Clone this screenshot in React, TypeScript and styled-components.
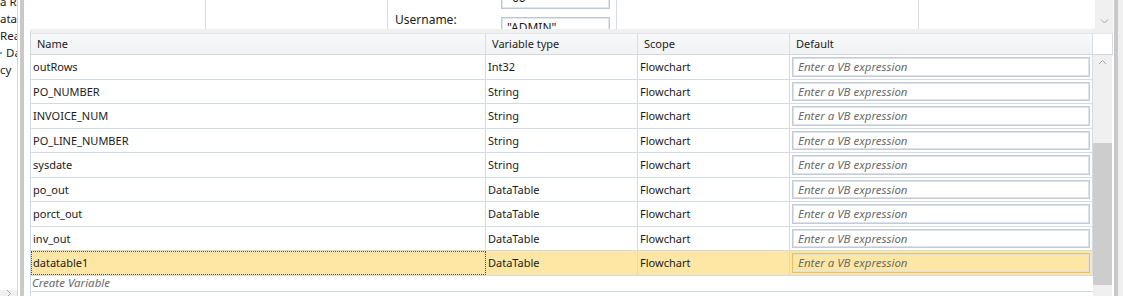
import React from 'react';
import styled, { createGlobalStyle } from 'styled-components';

type Variable = {
  name: string;
  type: string;
  scope: string;
};

const variables: Variable[] = [
  { name: 'outRows', type: 'Int32', scope: 'Flowchart' },
  { name: 'PO_NUMBER', type: 'String', scope: 'Flowchart' },
  { name: 'INVOICE_NUM', type: 'String', scope: 'Flowchart' },
  { name: 'PO_LINE_NUMBER', type: 'String', scope: 'Flowchart' },
  { name: 'sysdate', type: 'String', scope: 'Flowchart' },
  { name: 'po_out', type: 'DataTable', scope: 'Flowchart' },
  { name: 'porct_out', type: 'DataTable', scope: 'Flowchart' },
  { name: 'inv_out', type: 'DataTable', scope: 'Flowchart' },
  { name: 'datatable1', type: 'DataTable', scope: 'Flowchart' },
];

const treeItems = [
  { label: 'a Re', indent: 0 },
  { label: 'ata', indent: 0 },
  { label: 'Rea', indent: 0 },
  { label: 'Da', indent: 6, dot: true },
  { label: 'cy', indent: 0 },
];

const Chevron: React.FC<{ dir: 'up' | 'down' | 'right' }> = ({ dir }) => {
  const d =
    dir === 'up' ? 'M1 5 L4.5 1.5 L8 5' : dir === 'down' ? 'M1 1.5 L4.5 5 L8 1.5' : 'M2 1 L5.5 4.5 L2 8';
  return (
    <svg width="9" height="9" viewBox="0 0 9 9">
      <path d={d} fill="none" stroke="#a6a6a6" strokeWidth="1" />
    </svg>
  );
};

const App: React.FC = () => {
  return (
    <>
      <GlobalStyle />
      <Page>
        <TreePane>
          <TreeList>
            {treeItems.map((item) => (
              <TreeItem key={item.label} $indent={item.indent}>
                {item.dot && <TreeDot />}
                {item.label}
              </TreeItem>
            ))}
          </TreeList>
          <TreeScroll>
            <Chevron dir="right" />
          </TreeScroll>
        </TreePane>
        <Splitter />
        <Designer>
          <PropsPane>
            <PropsColumn $width={182} />
            <PropsColumn $width={182} />
            <PropsColumn $width={229}>
              <PropList>
                <PropRow>
                  <PropLabel>Password:</PropLabel>
                  <PropBox>"60"</PropBox>
                </PropRow>
                <PropRow>
                  <PropLabel>Username:</PropLabel>
                  <PropBox>"ADMIN"</PropBox>
                </PropRow>
              </PropList>
            </PropsColumn>
            <PropsColumn $width={302} />
            <PropsColumn $width={176} />
            <PropsScroll>
              <Chevron dir="down" />
            </PropsScroll>
          </PropsPane>
          <GridArea>
            <Grid>
              <HeaderRow>
                <HeaderCell $width={455}>Name</HeaderCell>
                <HeaderCell $width={152}>Variable type</HeaderCell>
                <HeaderCell $width={152}>Scope</HeaderCell>
                <HeaderCell $width={303}>Default</HeaderCell>
                <HeaderCorner />
              </HeaderRow>
              <Body>
                <Rows>
                  {variables.map((v) => {
                    const selected = v.name === 'datatable1';
                    return (
                      <Row key={v.name} $selected={selected}>
                        <NameCell $focused={selected}>{v.name}</NameCell>
                        <Cell $width={152}>{v.type}</Cell>
                        <Cell $width={152}>{v.scope}</Cell>
                        <DefaultCell>
                          <ExpressionBox $selected={selected}>Enter a VB expression</ExpressionBox>
                        </DefaultCell>
                      </Row>
                    );
                  })}
                  <CreateRow>Create Variable</CreateRow>
                </Rows>
                <VScroll>
                  <ScrollButton>
                    <Chevron dir="up" />
                  </ScrollButton>
                  <ScrollTrack $height={71} />
                  <ScrollThumb />
                  <ScrollTrack $height={6} />
                  <ScrollButton>
                    <Chevron dir="down" />
                  </ScrollButton>
                </VScroll>
              </Body>
            </Grid>
          </GridArea>
        </Designer>
        <OuterStrip />
      </Page>
    </>
  );
};

export default App;

const GlobalStyle = createGlobalStyle`
  html, body {
    margin: 0;
    padding: 0;
    background: #fff;
  }
  body {
    font-family: 'Noto Sans', 'Liberation Sans', sans-serif;
    font-size: 11px;
    color: #1b1b1b;
  }
`;

const Page = styled.div`
  display: flex;
  width: 1123px;
  height: 296px;
  overflow: hidden;
  background: #fff;
`;

const TreePane = styled.div`
  width: 18px;
  box-sizing: border-box;
  border-right: 1px solid #d6d6d6;
  display: flex;
  flex-direction: column;
  overflow: hidden;
`;

const TreeList = styled.div`
  flex: 1;
  margin-top: -7px;
`;

const TreeItem = styled.div<{ $indent: number }>`
  height: 17px;
  line-height: 17px;
  font-size: 11.5px;
  white-space: nowrap;
  padding-left: ${(p) => p.$indent}px;
  position: relative;
`;

const TreeDot = styled.span`
  position: absolute;
  left: 0;
  top: 8px;
  width: 2px;
  height: 2px;
  background: #6aa6d8;
`;

const TreeScroll = styled.div`
  height: 6px;
  background: #f0f0f0;
  padding-left: 5px;
  overflow: hidden;
  svg {
    display: block;
    margin-top: -1px;
  }
`;

const Splitter = styled.div`
  width: 6px;
  box-sizing: border-box;
  border-left: 2px solid #fff;
  background: #c9c9c9;
`;

const Designer = styled.div`
  width: 1089px;
  display: flex;
  flex-direction: column;
`;

const PropsPane = styled.div`
  height: 29px;
  display: flex;
  overflow: hidden;
`;

const PropsColumn = styled.div<{ $width: number }>`
  width: ${(p) => p.$width}px;
  box-sizing: border-box;
  border-right: 1px solid #d8dce3;
  overflow: hidden;
  &:nth-child(5) {
    border-right: none;
  }
`;

const PropList = styled.div`
  margin-top: -19px;
`;

const PropRow = styled.div`
  height: 30px;
  display: flex;
  align-items: flex-start;
`;

const PropLabel = styled.div`
  width: 106px;
  padding-left: 7px;
  line-height: 18px;
  font-size: 12px;
  color: #1b1b1b;
`;

const PropBox = styled.div`
  margin-top: 6px;
  width: 109px;
  height: 22px;
  box-sizing: border-box;
  border: 1px solid #bfc7d3;
  box-shadow: inset 0 0 0 1px #e1e5ec;
  padding: 3px 5px;
  line-height: 14px;
  font-size: 12px;
`;

const PropsScroll = styled.div`
  width: 18px;
  background: #f0f0f0;
  display: flex;
  justify-content: center;
  padding-top: 18px;
  box-sizing: border-box;
`;

const GridArea = styled.div`
  flex: 1;
  padding-left: 6px;
  overflow: hidden;
`;

const Grid = styled.div`
  border-top: 4px solid #f0f0f0;
  border-left: 1px solid #d3d9e3;
  width: 1083px;
  box-sizing: border-box;
  height: 100%;
  display: flex;
  flex-direction: column;
`;

const HeaderRow = styled.div`
  display: flex;
  height: 22px;
  box-sizing: border-box;
  border-top: 1px solid #e3e6eb;
  border-bottom: 1px solid #d3d9e3;
`;

const HeaderCell = styled.div<{ $width: number }>`
  width: ${(p) => p.$width}px;
  box-sizing: border-box;
  padding-left: 6px;
  line-height: 20px;
  background: linear-gradient(#f8f9fa, #f1f2f4);
  border-right: 1px solid #d9dde4;
  color: #1b1b1b;
`;

const HeaderCorner = styled.div`
  width: 19px;
  background: #fff;
  border-right: 1px solid #d9dde4;
`;

const Body = styled.div`
  flex: 1;
  display: flex;
  overflow: hidden;
`;

const Rows = styled.div`
  width: 1062px;
  display: flex;
  flex-direction: column;
`;

const Row = styled.div<{ $selected?: boolean }>`
  display: flex;
  flex: none;
  height: 24.5px;
  box-sizing: border-box;
  border-bottom: 1px solid #d5dbe5;
  background: ${(p) => (p.$selected ? '#fee7a5' : '#fff')};
`;

const Cell = styled.div<{ $width: number }>`
  width: ${(p) => p.$width}px;
  box-sizing: border-box;
  border-right: 1px solid #d5dbe5;
  padding-left: 2px;
  display: flex;
  align-items: center;
  white-space: nowrap;
`;

const NameCell = styled.div<{ $focused?: boolean }>`
  width: 455px;
  box-sizing: border-box;
  border-right: 1px solid #d5dbe5;
  padding-left: 2px;
  display: flex;
  align-items: center;
  outline: ${(p) => (p.$focused ? '1px dotted #5b4d33' : 'none')};
  outline-offset: -1px;
`;

const DefaultCell = styled.div`
  width: 303px;
  box-sizing: border-box;
  border-right: 1px solid #d5dbe5;
  padding: 2px;
  display: flex;
`;

const ExpressionBox = styled.div<{ $selected?: boolean }>`
  flex: 1;
  box-sizing: border-box;
  border: 1px solid ${(p) => (p.$selected ? '#e4c36e' : '#c3cbd8')};
  box-shadow: inset 0 0 0 1px #dde2ea;
  background: ${(p) => (p.$selected ? '#fee7a5' : '#fff')};
  padding-left: 5px;
  display: flex;
  align-items: center;
  font-style: italic;
  font-size: 11.5px;
  color: #6b6b6b;
`;

const CreateRow = styled.div`
  height: 16px;
  flex: none;
  box-sizing: border-box;
  border-bottom: 1px solid #d5dbe5;
  padding-left: 1px;
  line-height: 14px;
  font-style: italic;
  font-size: 11.5px;
  color: #6b6b6b;
`;

const VScroll = styled.div`
  width: 19px;
  background: #f0f0f0;
  display: flex;
  flex-direction: column;
`;

const ScrollButton = styled.div`
  height: 17px;
  flex: none;
  display: flex;
  justify-content: center;
  align-items: center;
`;

const ScrollTrack = styled.div<{ $height: number }>`
  height: ${(p) => p.$height}px;
  flex: none;
`;

const ScrollThumb = styled.div`
  height: 142px;
  flex: none;
  background: #cdcdcd;
`;

const OuterStrip = styled.div`
  width: 10px;
  background: linear-gradient(to right, #fff 0 1px, #c9c9c9 1px 5px, #f0f0f0 5px);
`;
